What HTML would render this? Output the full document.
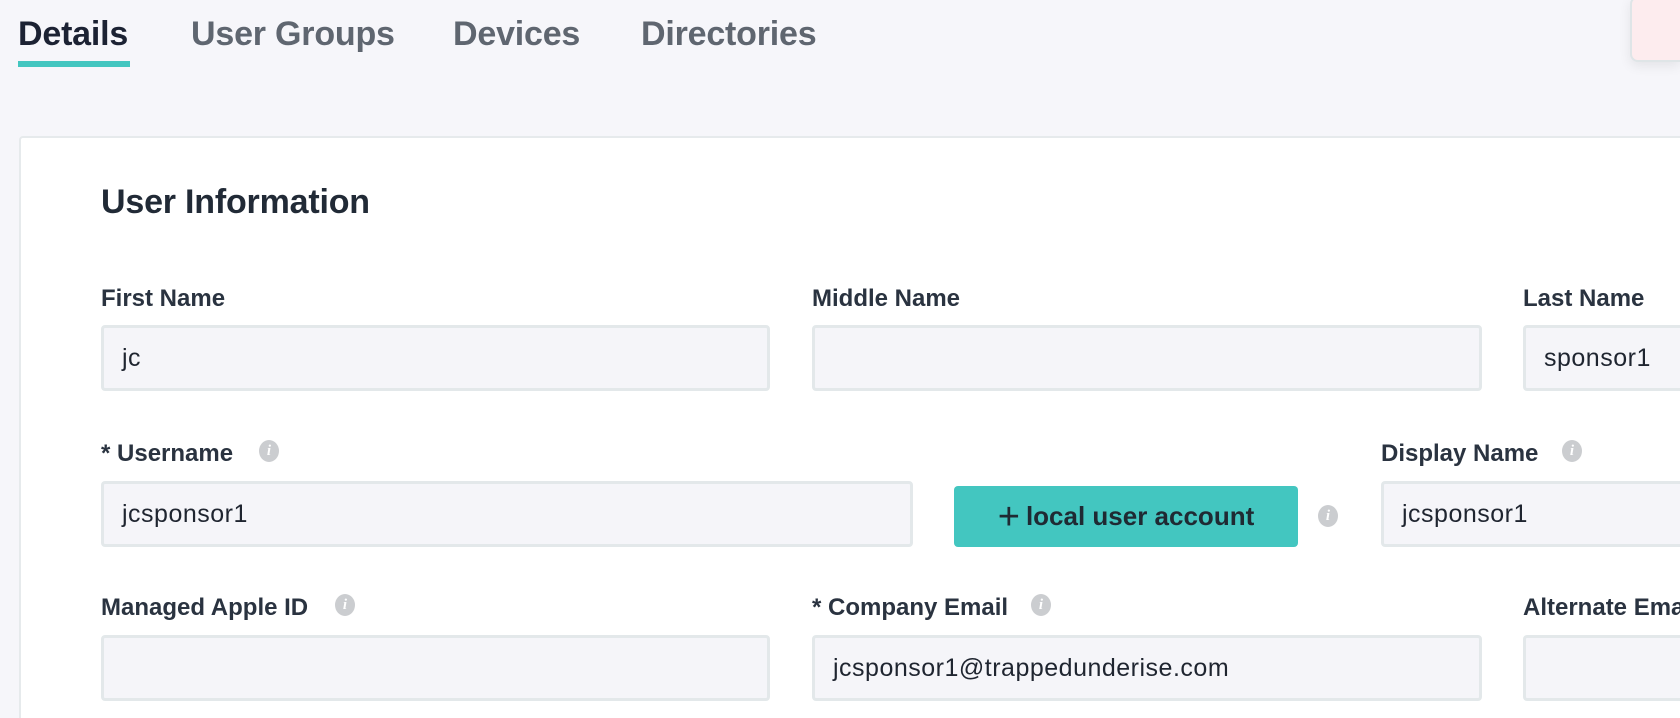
<!DOCTYPE html>
<html style="overflow:hidden;height:718px"><head><meta charset="utf-8"><style>
*{box-sizing:border-box;margin:0;padding:0}
body{width:1680px;height:718px;overflow:hidden;background:#f6f6fa;font-family:"Liberation Sans",sans-serif;position:relative}
.tab{position:absolute;top:15px;font-size:34px;font-weight:bold;color:#5f6670;letter-spacing:-0.2px}
.tab.a{color:#1c2233}
.ul{position:absolute;left:18px;top:61px;width:112px;height:6px;background:#43c6c0}
.toast{position:absolute;left:1630px;top:-4px;width:50px;height:66px;background:#fdecee;border:2px solid #dfe5e7;border-right:none;border-radius:8px 0 0 8px;box-shadow:0 4px 12px rgba(0,0,0,0.08)}
.card{position:absolute;left:19px;top:136px;width:1661px;height:582px;background:#fff;border:2px solid #e6eaec;border-right:none;border-bottom:none;border-radius:4px 0 0 0}
h2{position:absolute;left:101px;top:183px;font-size:34px;font-weight:bold;color:#212a36;letter-spacing:-0.2px}
.lb{position:absolute;font-size:24px;font-weight:bold;color:#2a3340;white-space:nowrap}
.in{position:absolute;background:#f5f5f9;border:3px solid #e3e8ea;border-radius:4px;font-size:25px;letter-spacing:0.5px;color:#1f2530;padding-left:18px;display:flex;align-items:center;white-space:nowrap;overflow:hidden}
.i{position:absolute;width:20px;height:22px;border-radius:50%;background:#cbcdd0;color:#fff;font:italic bold 15px "Liberation Serif",serif;text-align:center;line-height:22px}
.btn{position:absolute;left:954px;top:486px;width:344px;height:61px;background:#43c6c0;border-radius:4px;color:#1f2a33;font-size:26px;font-weight:bold;display:flex;align-items:center;justify-content:center}
</style></head><body>
<div class="tab a" style="left:18px">Details</div>
<div class="tab" style="left:191px">User Groups</div>
<div class="tab" style="left:453px">Devices</div>
<div class="tab" style="left:641px">Directories</div>
<div class="ul"></div>
<div class="toast"></div>
<div class="card"></div>
<h2>User Information</h2>

<div class="lb" style="left:101px;top:285px">First Name</div>
<div class="lb" style="left:812px;top:285px">Middle Name</div>
<div class="lb" style="left:1523px;top:285px">Last Name</div>
<div class="in" style="left:101px;top:325px;width:669px;height:66px">jc</div>
<div class="in" style="left:812px;top:325px;width:670px;height:66px"></div>
<div class="in" style="left:1523px;top:325px;width:200px;height:66px">sponsor1</div>

<div class="lb" style="left:101px;top:440px">* Username</div>
<div class="i" style="left:259px;top:440px">i</div>
<div class="lb" style="left:1381px;top:440px">Display Name</div>
<div class="i" style="left:1562px;top:440px">i</div>
<div class="in" style="left:101px;top:481px;width:812px;height:66px">jcsponsor1</div>
<div class="btn"><span style="font-size:38px;font-weight:normal;margin-right:6px;line-height:1">+</span>local user account</div>
<div class="i" style="left:1318px;top:505px">i</div>
<div class="in" style="left:1381px;top:481px;width:340px;height:66px">jcsponsor1</div>

<div class="lb" style="left:101px;top:594px">Managed Apple ID</div>
<div class="i" style="left:335px;top:594px">i</div>
<div class="lb" style="left:812px;top:594px">* Company Email</div>
<div class="i" style="left:1031px;top:594px">i</div>
<div class="lb" style="left:1523px;top:594px">Alternate Email</div>
<div class="in" style="left:101px;top:635px;width:669px;height:66px"></div>
<div class="in" style="left:812px;top:635px;width:670px;height:66px">jcsponsor1@trappedunderise.com</div>
<div class="in" style="left:1523px;top:635px;width:200px;height:66px"></div>
</body></html>
